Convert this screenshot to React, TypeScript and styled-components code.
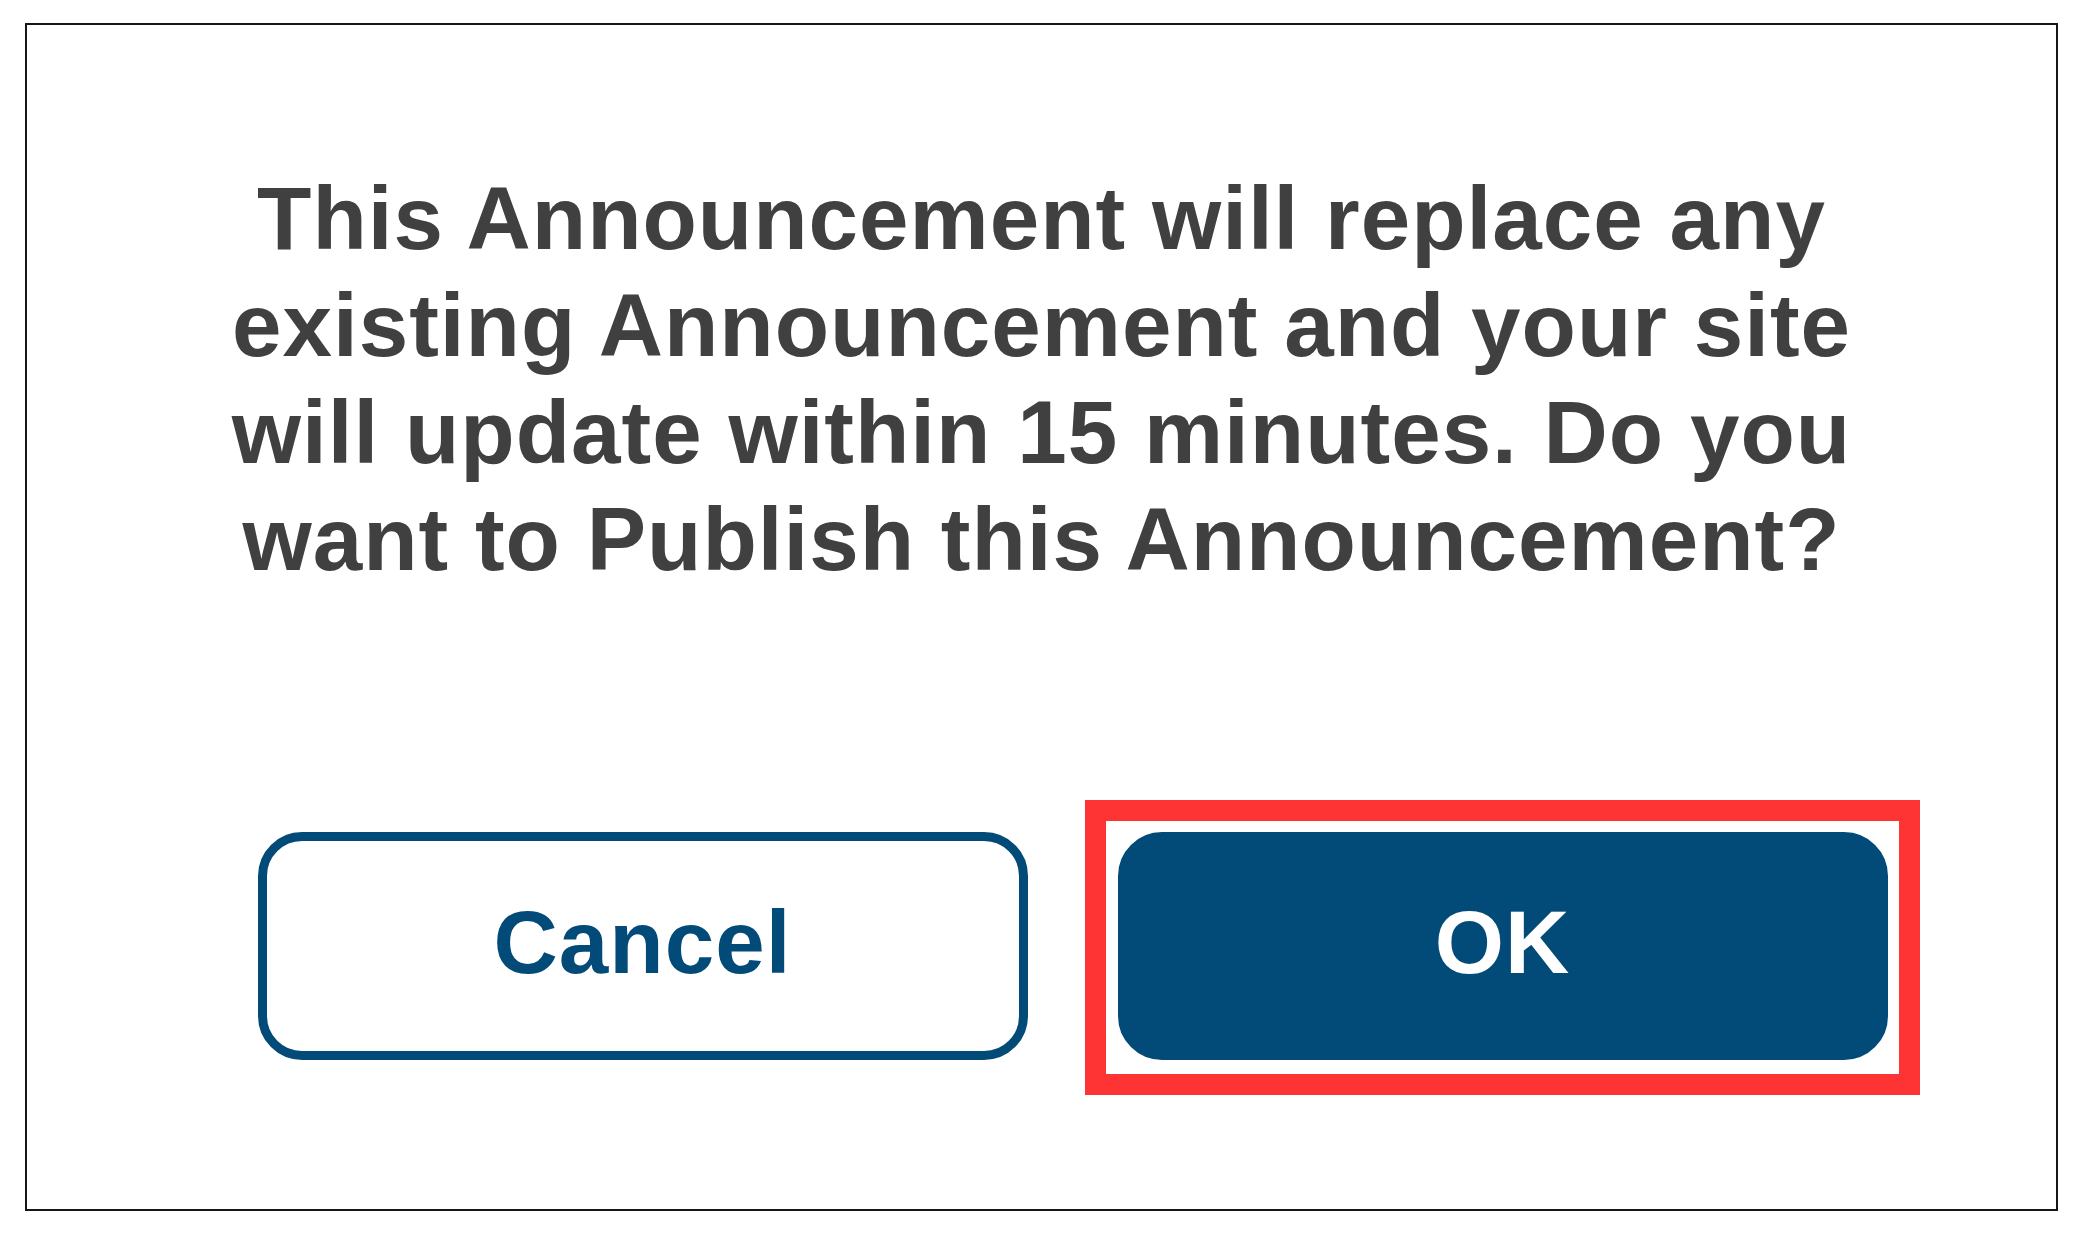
import React from 'react';
import styled, {createGlobalStyle} from 'styled-components';

const GlobalStyle = createGlobalStyle`
  html, body {
    margin: 0;
    padding: 0;
    background: #ffffff;
  }
  body {
    font-family: "Liberation Sans", Arial, sans-serif;
  }
`;

const Page = styled.div`
  padding: 23px 0 0 25px;
`;

const Dialog = styled.div`
  box-sizing: border-box;
  width: 2033px;
  border: 2px solid #161616;
  background: #ffffff;
  padding: 140px 0 149px;
  display: flex;
  flex-direction: column;
  align-items: center;
`;

const Message = styled.p`
  margin: 0 0 239px;
  max-width: 1720px;
  font-size: 89px;
  line-height: 107px;
  font-weight: 700;
  letter-spacing: 1px;
  color: #404040;
  text-align: center;
`;

const Actions = styled.div`
  display: flex;
  justify-content: center;
  gap: 90px;
  padding-left: 62px;
`;

const ActionButton = styled.button<{$primary?: boolean}>`
  box-sizing: border-box;
  width: 770px;
  height: 228px;
  padding: 0 0 8px;
  border: 9px solid #024b79;
  border-radius: 44px;
  background: ${({$primary}) => ($primary ? '#024b79' : '#ffffff')};
  color: ${({$primary}) => ($primary ? '#ffffff' : '#024b79')};
  font-family: "Liberation Sans", Arial, sans-serif;
  font-size: 89px;
  font-weight: 700;
  letter-spacing: 1px;
  display: flex;
  align-items: center;
  justify-content: center;
  cursor: pointer;
`;

// square red highlight drawn over the confirm button
const HighlightedButton = styled(ActionButton)`
  position: relative;

  &::after {
    content: '';
    position: absolute;
    top: -41px;
    left: -42px;
    right: -41px;
    bottom: -44px;
    border: 21px solid #fe3333;
    pointer-events: none;
  }
`;

const App: React.FC = () => {
  return (
    <>
      <GlobalStyle />
      <Page>
        <Dialog role="dialog">
          <Message>
            This Announcement will replace any existing Announcement and your site will update within 15
            minutes. Do you want to Publish this Announcement?
          </Message>
          <Actions>
            <ActionButton type="button">Cancel</ActionButton>
            <HighlightedButton type="button" $primary>
              OK
            </HighlightedButton>
          </Actions>
        </Dialog>
      </Page>
    </>
  );
};

export default App;
